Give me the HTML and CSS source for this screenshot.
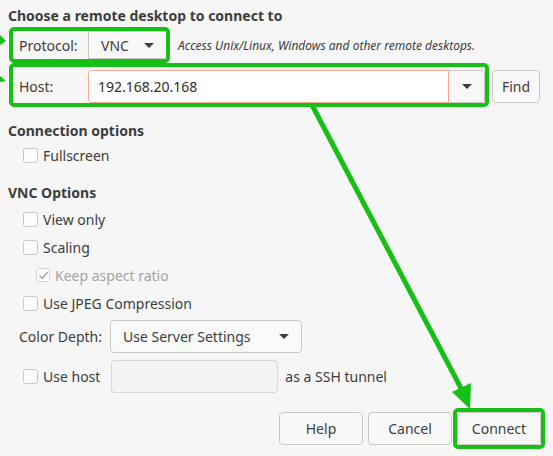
FILE: index.html
```html
<!doctype html>
<html lang="en">
  <head>
    <meta charset="UTF-8" />
    <meta name="viewport" content="width=device-width, initial-scale=1.0" />
    <title>Remote Desktop Viewer</title>
    <link rel="stylesheet" href="styles.css">
  </head>

  <body>
    <div class="dialog">
      <div class="title">Choose a remote desktop to connect to</div>

      <div class="protocol-row">
        <div class="mark">
          <span class="field-label">Protocol:</span>
          <div class="combo combo-protocol">
            <span>VNC</span>
            <span class="caret"></span>
          </div>
        </div>
        <span class="hint">Access Unix/Linux, Windows and other remote desktops.</span>
      </div>

      <div class="host-row">
        <div class="mark">
          <span class="field-label">Host:</span>
          <div class="host-entry">
            <div class="entry entry-focus">192.168.20.168</div>
            <div class="entry-btn"><span class="caret"></span></div>
          </div>
        </div>
        <button class="btn btn-find">Find</button>
      </div>

      <div class="section-title">Connection options</div>
      <label class="check">
        <span class="box"></span>
        <span>Fullscreen</span>
      </label>

      <div class="section-title section-vnc">VNC Options</div>
      <label class="check">
        <span class="box"></span>
        <span>View only</span>
      </label>
      <label class="check">
        <span class="box"></span>
        <span>Scaling</span>
      </label>
      <label class="check check-sub disabled">
        <span class="box checked">
          <svg width="11" height="11" viewBox="0 0 11 11">
            <path d="M1.5 5.5 L4.3 8.3 L9.5 2.3" fill="none" stroke="#a9a9a9" stroke-width="1.6" />
          </svg>
        </span>
        <span>Keep aspect ratio</span>
      </label>
      <label class="check">
        <span class="box"></span>
        <span>Use JPEG Compression</span>
      </label>

      <div class="depth-row">
        <span class="depth-label">Color Depth:</span>
        <div class="combo combo-depth">
          <span>Use Server Settings</span>
          <span class="caret"></span>
        </div>
      </div>

      <div class="ssh-row">
        <label class="check check-inline">
          <span class="box"></span>
          <span>Use host</span>
        </label>
        <div class="entry entry-disabled"></div>
        <span>as a SSH tunnel</span>
      </div>

      <div class="actions">
        <button class="btn">Help</button>
        <button class="btn">Cancel</button>
        <div class="mark mark-btn">
          <button class="btn">Connect</button>
        </div>
      </div>
    </div>

    <!-- annotation arrows drawn over the dialog -->
    <svg class="arrows" width="553" height="456" viewBox="0 0 553 456">
      <polygon points="0,35 6,41 0,45" fill="#16c016" />
      <polygon points="0,76 6,81 0,82" fill="#16c016" />
      <line x1="312" y1="105" x2="463" y2="392" stroke="#16c016" stroke-width="5" />
      <polygon points="452,392 471,383 470,409" fill="#16c016" />
    </svg>
  </body>
</html>
```

FILE: styles.css
```css
body {
  margin: 0;
  background-color: #f6f6f6;
  color: #3d3d3d;
  font-family: "Noto Sans", "DejaVu Sans", sans-serif;
  font-size: 14px;
}

.dialog {
  width: 553px;
  height: 456px;
  padding: 7px 8px 0 8px;
  box-sizing: border-box;
  display: flex;
  flex-direction: column;
}

.title {
  font-weight: bold;
  line-height: 18px;
}

.mark {
  display: flex;
  align-items: center;
  border: 4px solid #16c016;
  border-radius: 5px;
}

.field-label {
  width: 69px;
  padding-left: 6px;
}

.protocol-row {
  display: flex;
  align-items: center;
  margin-top: 2px;
  margin-left: 1px;
}
.protocol-row .mark {
  height: 28px;
}

.hint {
  margin-left: 8px;
  font-size: 12px;
  font-style: italic;
}

.combo {
  display: flex;
  align-items: center;
  justify-content: space-between;
  box-sizing: border-box;
  height: 28px;
  padding: 0 12px;
  background-color: #f8f8f8;
  border: 1px solid #cdc7c2;
  border-radius: 4px;
}
.combo-protocol {
  width: 78px;
  border-right: none;
  border-radius: 0;
}
.combo-depth {
  width: 192px;
  height: 33px;
  background-color: #fafafa;
}

.caret {
  width: 0;
  height: 0;
  border-left: 5px solid transparent;
  border-right: 5px solid transparent;
  border-top: 5px solid #3d3d3d;
}

.host-row {
  display: flex;
  align-items: flex-end;
  margin-left: 1px;
}
.host-row .mark {
  width: 472px;
  height: 36px;
  align-items: flex-end;
}
.host-row .field-label {
  align-self: center;
  padding-top: 3px;
}

.host-entry {
  display: flex;
  flex: 1;
  height: 33px;
}

.entry {
  box-sizing: border-box;
  height: 33px;
  background-color: #ffffff;
  border: 1px solid #cdc7c2;
  border-radius: 4px;
}
.entry-focus {
  flex: 1;
  display: flex;
  align-items: center;
  padding-left: 9px;
  border-color: #f2a88e;
  border-radius: 4px 0 0 4px;
  color: #2e2e2e;
}
.entry-btn {
  display: flex;
  align-items: center;
  justify-content: center;
  width: 35px;
  background-color: #f8f8f8;
  border: 1px solid #cdc7c2;
  border-left: none;
  border-radius: 0 4px 4px 0;
}
.entry-disabled {
  width: 167px;
  background-color: #f4f4f4;
  border-color: #dad6d2;
}

.btn {
  box-sizing: border-box;
  width: 84px;
  height: 33px;
  background-color: #f8f8f8;
  border: 1px solid #cdc7c2;
  border-radius: 4px;
  font-family: inherit;
  font-size: 14px;
  color: #3d3d3d;
}
.btn-find {
  width: 48px;
  margin-left: 3px;
  margin-bottom: 4px;
}

.section-title {
  font-weight: bold;
  line-height: 18px;
  margin-top: 15px;
  margin-bottom: 1px;
}
.section-vnc {
  margin-bottom: 3px;
}

.check {
  display: flex;
  align-items: center;
  gap: 5px;
  height: 28px;
  padding-left: 15px;
}
.check-sub {
  padding-left: 28px;
}
.check-inline {
  padding-left: 15px;
  height: auto;
}
.disabled {
  color: #a4a4a4;
}

.box {
  display: flex;
  align-items: center;
  justify-content: center;
  box-sizing: border-box;
  width: 15px;
  height: 15px;
  background-color: #fcfcfc;
  border: 1px solid #cdc7c2;
  border-radius: 3px;
}
.box.checked {
  width: 14px;
  height: 14px;
  border-color: #dad6d2;
}

.depth-row {
  display: flex;
  align-items: center;
  margin-top: 3px;
  padding-left: 11px;
}
.depth-label {
  width: 91px;
}

.ssh-row {
  display: flex;
  align-items: center;
  margin-top: 7px;
}
.ssh-row .entry {
  margin-left: 11px;
  margin-right: 7px;
}

.actions {
  display: flex;
  justify-content: flex-end;
  align-items: center;
  gap: 5px;
  margin-top: 15px;
}
.mark-btn {
  margin-left: -4px;
}

.arrows {
  position: absolute;
  top: 0;
  left: 0;
  pointer-events: none;
}
```
